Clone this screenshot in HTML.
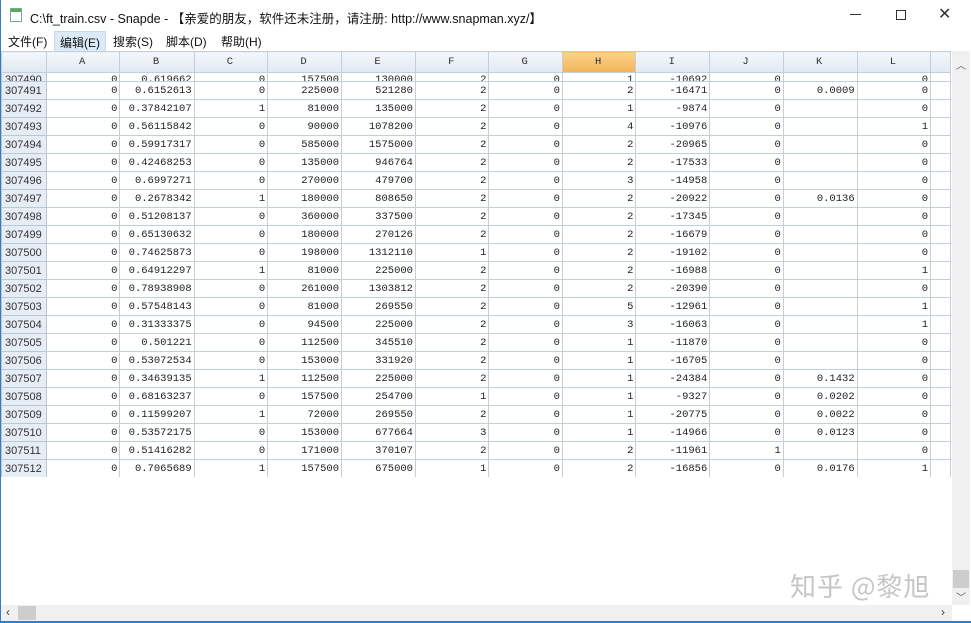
<!DOCTYPE html>
<html><head><meta charset="utf-8"><style>
*{margin:0;padding:0;box-sizing:border-box}
body{width:971px;height:623px;overflow:hidden;background:#fff;position:relative;font-family:"Liberation Sans","Noto Sans CJK SC",sans-serif}
.title{position:absolute;left:0;top:0;width:971px;height:30px;background:#fff;font-size:12.5px;color:#111}
.title .t{position:absolute;left:30px;top:8px}
.menu{position:absolute;top:31px;left:0;height:19px;font-size:12px;color:#111}
.menu span{position:absolute;top:2px;white-space:nowrap}
.grid{position:absolute;left:1px;top:51px;width:950px;height:426px;overflow:hidden}
table{border-collapse:collapse;table-layout:fixed;font-family:"Liberation Mono",monospace;font-size:10.5px;color:#222}
td{border:1px solid #c3cfdc;height:18px;text-align:right;padding-right:2px;white-space:nowrap;overflow:hidden;line-height:16px}
td.r{background:#e6edf5;text-align:left;padding-left:3px;border-color:#b8c6d6;color:#333;font-family:"Liberation Sans",sans-serif;font-size:11px}
tr.h td{height:21px;background:linear-gradient(#f4f7fb,#e2e9f2);text-align:center;border-color:#c3cfdc;color:#333}
tr.h td.hl{background:linear-gradient(#fbd38a,#f4b458)}
tr.p td{height:9px;line-height:2px;vertical-align:bottom}
.vs{position:absolute;left:952px;top:51px;width:18px;height:554px;background:#f0f0f0}
.hs{position:absolute;left:1px;top:605px;width:951px;height:16px;background:#f0f0f0}
</style></head><body>
<div class="title">
<div style="position:absolute;left:10px;top:8px;width:12px;height:14px;border:1px solid #7a9;background:linear-gradient(#5a5 0 3px,#fff 3px)"></div>
<div class="t">C:\ft_train.csv - Snapde - 【亲爱的朋友，软件还未注册，请注册: http://www.snapman.xyz/】</div>
<div style="position:absolute;left:850px;top:14px;width:11px;height:1px;background:#333"></div>
<div style="position:absolute;left:896px;top:10px;width:10px;height:10px;border:1px solid #333"></div>
<div style="position:absolute;left:938px;top:4px;font-size:16px;color:#333">✕</div>
</div>
<div class="menu">
<span style="left:8px">文件(F)</span>
<span style="left:54px;top:0;padding:2px 5px;background:#dce9f7;border:1px solid #c5d9ee">编辑(E)</span>
<span style="left:113px">搜索(S)</span>
<span style="left:166px">脚本(D)</span>
<span style="left:221px">帮助(H)</span>
</div>
<div class="grid"><table>
<colgroup><col style="width:45px"><col span="12" style="width:74.35px"><col style="width:20px"></colgroup>
<tr class="h"><td class="r" style="background:linear-gradient(#f4f7fb,#dfe7f0)"></td><td>A</td><td>B</td><td>C</td><td>D</td><td>E</td><td>F</td><td>G</td><td class="hl">H</td><td>I</td><td>J</td><td>K</td><td>L</td><td></td></tr>
<tr class="p"><td class="r">307490</td><td>0</td><td>0.619662</td><td>0</td><td>157500</td><td>130000</td><td>2</td><td>0</td><td>1</td><td>-10692</td><td>0</td><td></td><td>0</td><td></td></tr>
<tr><td class="r">307491</td><td>0</td><td>0.6152613</td><td>0</td><td>225000</td><td>521280</td><td>2</td><td>0</td><td>2</td><td>-16471</td><td>0</td><td>0.0009</td><td>0</td><td></td></tr>
<tr><td class="r">307492</td><td>0</td><td>0.37842107</td><td>1</td><td>81000</td><td>135000</td><td>2</td><td>0</td><td>1</td><td>-9874</td><td>0</td><td></td><td>0</td><td></td></tr>
<tr><td class="r">307493</td><td>0</td><td>0.56115842</td><td>0</td><td>90000</td><td>1078200</td><td>2</td><td>0</td><td>4</td><td>-10976</td><td>0</td><td></td><td>1</td><td></td></tr>
<tr><td class="r">307494</td><td>0</td><td>0.59917317</td><td>0</td><td>585000</td><td>1575000</td><td>2</td><td>0</td><td>2</td><td>-20965</td><td>0</td><td></td><td>0</td><td></td></tr>
<tr><td class="r">307495</td><td>0</td><td>0.42468253</td><td>0</td><td>135000</td><td>946764</td><td>2</td><td>0</td><td>2</td><td>-17533</td><td>0</td><td></td><td>0</td><td></td></tr>
<tr><td class="r">307496</td><td>0</td><td>0.6997271</td><td>0</td><td>270000</td><td>479700</td><td>2</td><td>0</td><td>3</td><td>-14958</td><td>0</td><td></td><td>0</td><td></td></tr>
<tr><td class="r">307497</td><td>0</td><td>0.2678342</td><td>1</td><td>180000</td><td>808650</td><td>2</td><td>0</td><td>2</td><td>-20922</td><td>0</td><td>0.0136</td><td>0</td><td></td></tr>
<tr><td class="r">307498</td><td>0</td><td>0.51208137</td><td>0</td><td>360000</td><td>337500</td><td>2</td><td>0</td><td>2</td><td>-17345</td><td>0</td><td></td><td>0</td><td></td></tr>
<tr><td class="r">307499</td><td>0</td><td>0.65130632</td><td>0</td><td>180000</td><td>270126</td><td>2</td><td>0</td><td>2</td><td>-16679</td><td>0</td><td></td><td>0</td><td></td></tr>
<tr><td class="r">307500</td><td>0</td><td>0.74625873</td><td>0</td><td>198000</td><td>1312110</td><td>1</td><td>0</td><td>2</td><td>-19102</td><td>0</td><td></td><td>0</td><td></td></tr>
<tr><td class="r">307501</td><td>0</td><td>0.64912297</td><td>1</td><td>81000</td><td>225000</td><td>2</td><td>0</td><td>2</td><td>-16988</td><td>0</td><td></td><td>1</td><td></td></tr>
<tr><td class="r">307502</td><td>0</td><td>0.78938908</td><td>0</td><td>261000</td><td>1303812</td><td>2</td><td>0</td><td>2</td><td>-20390</td><td>0</td><td></td><td>0</td><td></td></tr>
<tr><td class="r">307503</td><td>0</td><td>0.57548143</td><td>0</td><td>81000</td><td>269550</td><td>2</td><td>0</td><td>5</td><td>-12961</td><td>0</td><td></td><td>1</td><td></td></tr>
<tr><td class="r">307504</td><td>0</td><td>0.31333375</td><td>0</td><td>94500</td><td>225000</td><td>2</td><td>0</td><td>3</td><td>-16063</td><td>0</td><td></td><td>1</td><td></td></tr>
<tr><td class="r">307505</td><td>0</td><td>0.501221</td><td>0</td><td>112500</td><td>345510</td><td>2</td><td>0</td><td>1</td><td>-11870</td><td>0</td><td></td><td>0</td><td></td></tr>
<tr><td class="r">307506</td><td>0</td><td>0.53072534</td><td>0</td><td>153000</td><td>331920</td><td>2</td><td>0</td><td>1</td><td>-16705</td><td>0</td><td></td><td>0</td><td></td></tr>
<tr><td class="r">307507</td><td>0</td><td>0.34639135</td><td>1</td><td>112500</td><td>225000</td><td>2</td><td>0</td><td>1</td><td>-24384</td><td>0</td><td>0.1432</td><td>0</td><td></td></tr>
<tr><td class="r">307508</td><td>0</td><td>0.68163237</td><td>0</td><td>157500</td><td>254700</td><td>1</td><td>0</td><td>1</td><td>-9327</td><td>0</td><td>0.0202</td><td>0</td><td></td></tr>
<tr><td class="r">307509</td><td>0</td><td>0.11599207</td><td>1</td><td>72000</td><td>269550</td><td>2</td><td>0</td><td>1</td><td>-20775</td><td>0</td><td>0.0022</td><td>0</td><td></td></tr>
<tr><td class="r">307510</td><td>0</td><td>0.53572175</td><td>0</td><td>153000</td><td>677664</td><td>3</td><td>0</td><td>1</td><td>-14966</td><td>0</td><td>0.0123</td><td>0</td><td></td></tr>
<tr><td class="r">307511</td><td>0</td><td>0.51416282</td><td>0</td><td>171000</td><td>370107</td><td>2</td><td>0</td><td>2</td><td>-11961</td><td>1</td><td></td><td>0</td><td></td></tr>
<tr><td class="r">307512</td><td>0</td><td>0.7065689</td><td>1</td><td>157500</td><td>675000</td><td>1</td><td>0</td><td>2</td><td>-16856</td><td>0</td><td>0.0176</td><td>1</td><td></td></tr>
</table></div>
<div class="vs">
<div style="position:absolute;left:4px;top:6px;font-size:10px;color:#555">︿</div>
<div style="position:absolute;left:1px;top:519px;width:16px;height:18px;background:#cdcdcd"></div>
<div style="position:absolute;left:4px;top:538px;font-size:10px;color:#555">﹀</div>
</div>
<div class="hs">
<div style="position:absolute;left:5px;top:0px;font-size:12px;color:#444">‹</div>
<div style="position:absolute;left:17px;top:1px;width:18px;height:14px;background:#cdcdcd"></div>
<div style="position:absolute;left:940px;top:0px;font-size:12px;color:#444">›</div>
</div>
<div style="position:absolute;left:790px;top:567px;font-size:26px;color:rgba(150,150,150,0.55);font-family:'Noto Sans CJK SC',sans-serif;letter-spacing:1px">知乎 @黎旭</div>
<div style="position:absolute;left:0;top:0;width:1px;height:623px;background:#2f7fc8"></div>
<div style="position:absolute;left:0;top:621px;width:971px;height:2px;background:#2f7fc8"></div>
</body></html>
